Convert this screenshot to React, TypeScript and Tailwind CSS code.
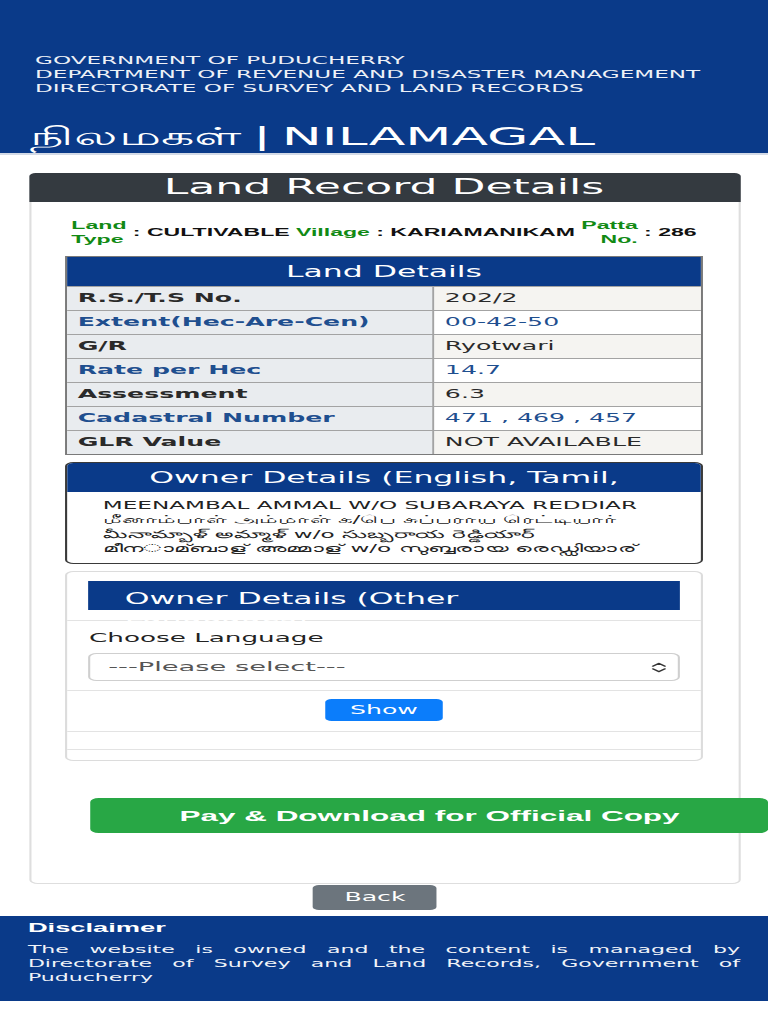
import React from "react";

const rows: [string, string][] = [
  ["R.S./T.S No.", "202/2"],
  ["Extent(Hec-Are-Cen)", "00-42-50"],
  ["G/R", "Ryotwari"],
  ["Rate per Hec", "14.7"],
  ["Assessment", "6.3"],
  ["Cadastral Number", "471 , 469 , 457"],
  ["GLR Value", "NOT AVAILABLE"],
];

function Chevrons() {
  return (
    <svg width="8" height="11" viewBox="0 0 8 11" fill="none" stroke="#333" strokeWidth="1.2" strokeLinecap="round" strokeLinejoin="round">
      <path d="M1.2 4.2 L4 1.4 L6.8 4.2" />
      <path d="M1.2 6.8 L4 9.6 L6.8 6.8" />
    </svg>
  );
}

export default function App() {
  return (
    <div className="bg-white min-h-[1024px] w-[768px] overflow-hidden">
      <div className="w-[366px] origin-top-left scale-x-[2.0984] font-['DejaVu_Sans','Noto_Sans',sans-serif]">
        {/* Header */}
        <header className="h-[155px] bg-[#0a3a89] border-b-2 border-[#d3dae6] pt-[54px]">
          <div className="pl-[16.7px] text-[11px] leading-[14px] text-[#eef1f7]">
            <div>GOVERNMENT OF PUDUCHERRY</div>
            <div>DEPARTMENT OF REVENUE AND DISASTER MANAGEMENT</div>
            <div>DIRECTORATE OF SURVEY AND LAND RECORDS</div>
          </div>
          <div className="mt-[25px] pl-[14.5px] text-[25.5px] leading-[30px] text-white whitespace-nowrap [word-spacing:-3px]">
            <span className="text-[25px]">நிலமகள்</span> | NILAMAGAL
          </div>
        </header>

        {/* Card */}
        <div className="mt-[18px] mx-[13.5px] border border-[#dedede] rounded-[4px]">
          <div className="-mx-px -mt-px h-[29px] bg-[#343a40] rounded-t-[3px] text-center text-white text-[21px] leading-[29px]">
            Land Record Details
          </div>

          <div className="px-[16.5px] pb-[50px]">
            {/* info row */}
            <div className="pt-[16px] flex items-center justify-center gap-[3px] font-['Liberation_Sans',Arial,sans-serif] text-[11px] leading-[14px] font-bold whitespace-nowrap">
              <div className="text-[#118a14] leading-[14px]">
                <div>Land</div>
                <div>Type</div>
              </div>
              <div className="text-[#111]">: CULTIVABLE</div>
              <div className="text-[#118a14]">Village</div>
              <div className="text-[#111]">: KARIAMANIKAM</div>
              <div className="text-[#118a14] text-right">
                <div>Patta</div>
                <div>No.</div>
              </div>
              <div className="text-[#111]">: 286</div>
            </div>

            {/* Land details table */}
            <div className="mt-[9.5px] border border-[#7a7a7a]">
              <div className="h-[29px] bg-[#0a3a89] text-center text-white text-[15px] leading-[30px]">
                Land Details
              </div>
              {rows.map(([k, v], i) =>
                i % 2 === 0 ? (
                  <div key={k} className="grid grid-cols-[175px_1fr] h-[24px] border-t border-[#a3a3a3] text-[12px] leading-[23px] text-[#2a2a2a]">
                    <div className="px-[5px] font-bold bg-[#e9ecef] border-r border-[#a3a3a3] whitespace-nowrap">{k}</div>
                    <div className="px-[5px] bg-[#f5f4f1] whitespace-nowrap">{v}</div>
                  </div>
                ) : (
                  <div key={k} className="grid grid-cols-[175px_1fr] h-[24px] border-t border-[#a3a3a3] text-[12px] leading-[23px] text-[#1f4f8f]">
                    <div className="px-[5px] font-bold bg-[#e9ecef] border-r border-[#a3a3a3] whitespace-nowrap">{k}</div>
                    <div className="px-[5px] bg-white whitespace-nowrap">{v}</div>
                  </div>
                )
              )}
            </div>

            {/* Owner details */}
            <div className="mt-[7px] border border-[#3a3a3a] rounded-[4px] overflow-hidden">
              <div className="h-[29px] bg-[#0a3a89] px-[20px] text-center text-white text-[15px] leading-[30px] whitespace-nowrap">
                Owner Details (English, Tamil,
              </div>
              <div className="pl-[17px] pt-[7.5px] pb-[7px] text-[11px] leading-[14.3px] text-[#222] whitespace-nowrap">
                <div>MEENAMBAL AMMAL W/O SUBARAYA REDDIAR</div>
                <div>மீனாம்பாள் அம்மாள் க/பெ சுப்பராய ரெட்டியார்</div>
                <div>మీనామ్బాళ్ అమ్మాళ్ w/o సుబ్బరాయ రెడ్డియార్</div>
                <div>മീന◌ാമ്ബാള് അമ്മാള് w/o സുബ്ബരായ രെഡ്ഡിയാര്</div>
              </div>
            </div>

            {/* Other languages */}
            <div className="mt-[7px] border border-[#dcdcdc] rounded-[4px]">
              <div className="pt-[9px] px-[10.4px] pb-[10px]">
                <div className="h-[29px] bg-[#0a3a89] pl-[17px] pr-[40px] pt-[8.5px] text-[15px] leading-[18px] text-white">
                  Owner Details (Other Languages)
                </div>
              </div>
              <div className="border-t border-[#e3e3e3] px-[10.4px] pt-[8px] pb-[9px]">
                <div className="text-[12.5px] leading-[18px] text-[#222]">Choose Language</div>
                <div className="mt-[6px] h-[28px] border border-[#cfcfcf] rounded-[4px] bg-white flex items-center justify-between pl-[8.2px] pr-[5px]">
                  <span className="text-[13px] text-[#555] leading-[26px]">---Please select---</span>
                  <Chevrons />
                </div>
              </div>
              <div className="border-t border-[#e3e3e3] pt-[8px] pb-[10px] flex justify-center">
                <div className="w-[56px] h-[22px] rounded-[3px] bg-[#0b7dfb] text-center text-white text-[12px] leading-[22px]">
                  Show
                </div>
              </div>
              <div className="border-t border-[#e3e3e3] h-[18px]" />
              <div className="border-t border-[#e3e3e3] h-[11px]" />
            </div>

            {/* Pay button */}
            <div className="mt-[37px] ml-[12.4px] w-[322.6px] h-[35px] rounded-[4px] bg-[#28a745] text-center text-white font-['Liberation_Sans',Arial,sans-serif] text-[15px] font-bold leading-[35px] whitespace-nowrap">
              Pay &amp; Download for Official Copy
            </div>
          </div>
        </div>

        {/* Back */}
        <div className="mt-px flex justify-center pr-[8.6px]">
          <div className="w-[59px] h-[25px] rounded-[3px] bg-[#6c757d] text-center text-white text-[12px] leading-[25px]">
            Back
          </div>
        </div>

        {/* Footer */}
        <footer className="mt-[6px] bg-[#0a3a89] px-[13.3px] pt-[4px] pb-[17px] text-white">
          <div className="font-['Liberation_Sans',Arial,sans-serif] text-[13px] font-bold leading-[16px]">Disclaimer</div>
          <p className="mt-[6px] text-[10.5px] leading-[14px] text-justify text-[#f0f3f8]">
            The website is owned and the content is managed by Directorate of Survey and Land Records, Government of Puducherry
          </p>
        </footer>
      </div>
    </div>
  );
}
